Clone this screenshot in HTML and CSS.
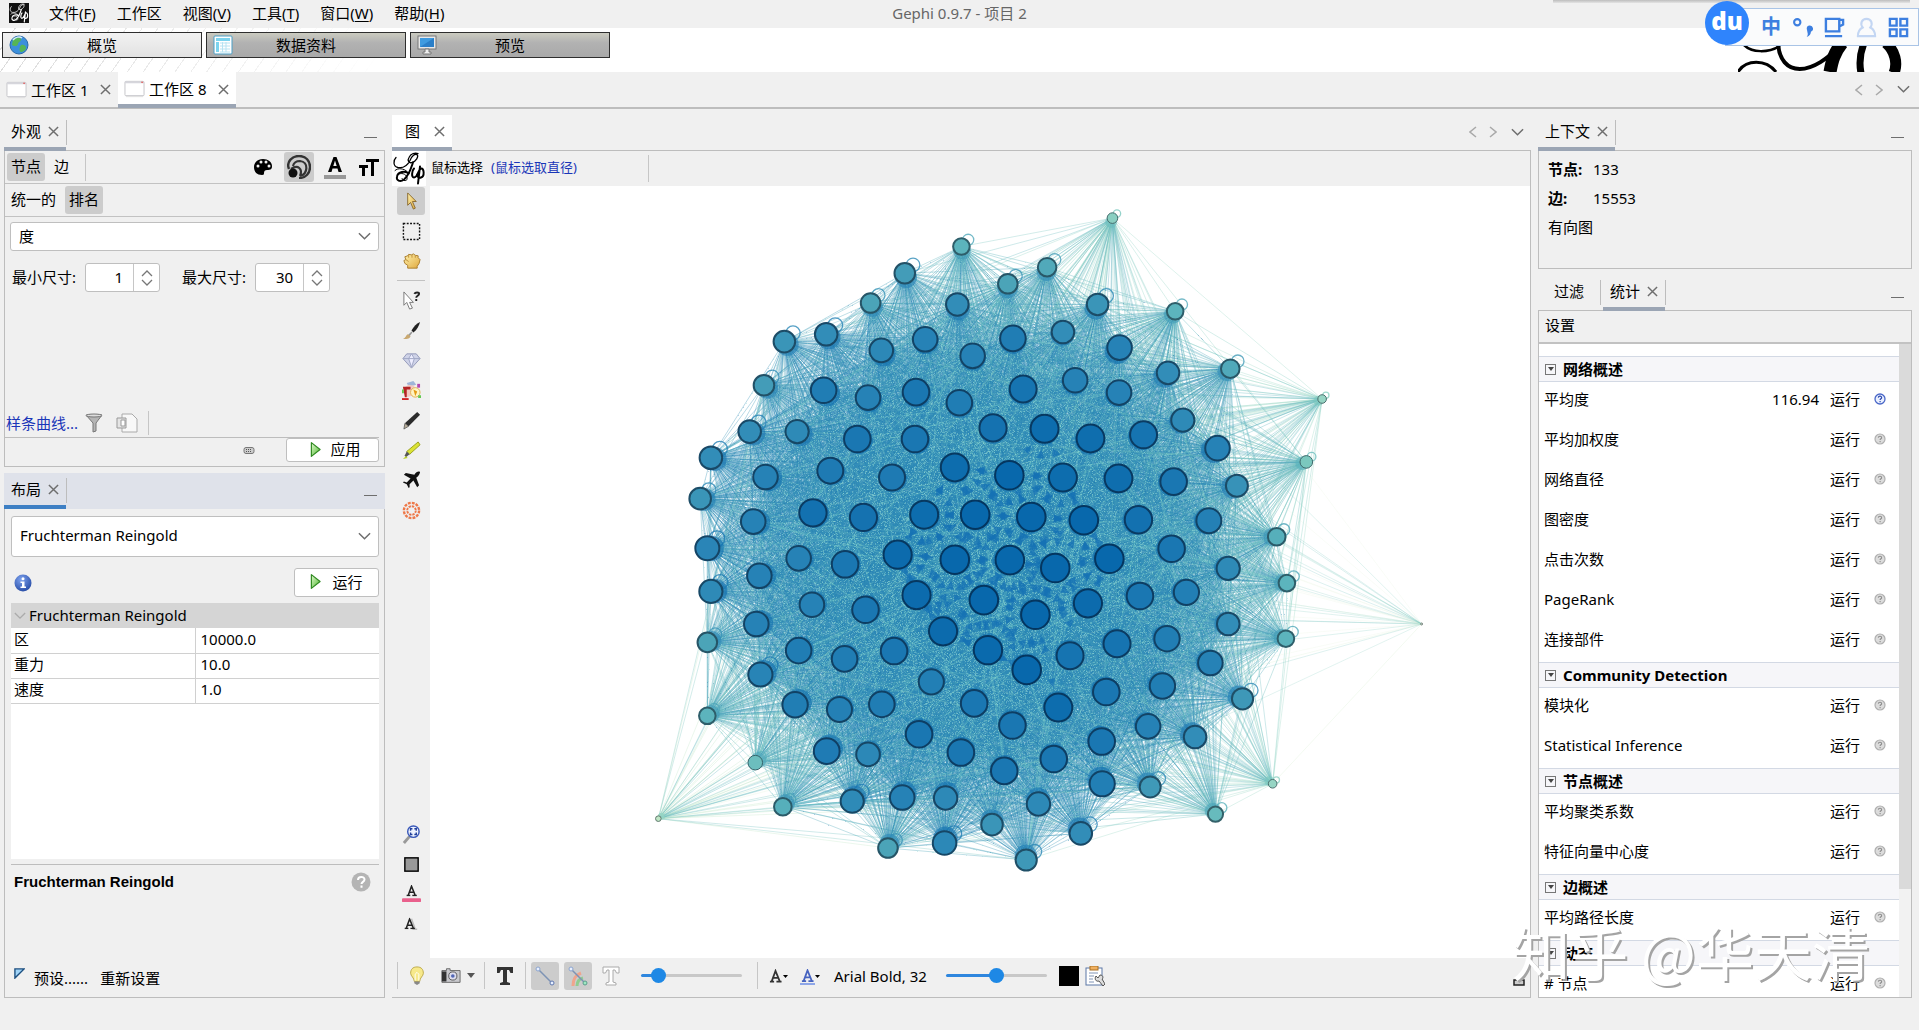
FILE: index.html
```html
<!DOCTYPE html>
<html lang="zh-CN">
<head>
<meta charset="utf-8">
<title>Gephi 0.9.7 - 项目 2</title>
<link rel="stylesheet" href="styles.css">
</head>
<body>
<svg class="defs" aria-hidden="true">
  <defs>
    <linearGradient id="gPlay" x1="0" y1="0" x2="1" y2="1"><stop offset="0" stop-color="#e2f8cf"/><stop offset="1" stop-color="#4cb82e"/></linearGradient>
    <radialGradient id="gBall" cx=".4" cy=".3" r=".8"><stop offset="0" stop-color="#7da2ee"/><stop offset="1" stop-color="#1f449f"/></radialGradient>
    <linearGradient id="gGold" x1="0" y1="0" x2="1" y2="1"><stop offset="0" stop-color="#fff3b0"/><stop offset="1" stop-color="#e0a83c"/></linearGradient>
    <symbol id="x" viewBox="0 0 12 12"><path d="M1 1l10 10M11 1L1 11" stroke="#6e6e6e" stroke-width="1.6" fill="none"/></symbol>
    <symbol id="down" viewBox="0 0 14 9"><path d="M1 1l6 6 6-6" stroke="#6e6e6e" stroke-width="1.6" fill="none"/></symbol>
    <symbol id="left" viewBox="0 0 8 12"><path d="M7 1L1 6l6 5" stroke="#a9a9a9" stroke-width="1.5" fill="none"/></symbol>
    <symbol id="right" viewBox="0 0 8 12"><path d="M1 1l6 5-6 5" stroke="#a9a9a9" stroke-width="1.5" fill="none"/></symbol>
    <symbol id="win" viewBox="0 0 22 18"><rect x="1" y="1" width="20" height="15" rx="1" fill="#fff" stroke="#c4c4c8"/><path d="M1 2h20" stroke="#d6d6dc" stroke-width="2"/><path d="M18 2h2" stroke="#e07070" stroke-width="1.5"/><path d="M2 17h18" stroke="#ddd"/></symbol>
    <symbol id="play" viewBox="0 0 12 18"><path d="M1.500 1.500v15L11 9z" fill="url(#gPlay)" stroke="#2f8a20" stroke-width="1.300" stroke-linejoin="round"/></symbol>
    <symbol id="help" viewBox="0 0 12 12"><circle cx="6" cy="6" r="5" fill="#dcdcdc" stroke="#b0b0b0" stroke-width="1.200"/><path d="M4.300 4.600c.2-2 3.600-1.800 3.300.2-.2 1-1.500 1-1.500 2.200M6.100 8.100v1.100" fill="none" stroke="#8e8e8e" stroke-width="1.100"/></symbol>
    <symbol id="helpOn" viewBox="0 0 12 12"><circle cx="6" cy="6" r="5" fill="#eaf0ff" stroke="#4a68c8" stroke-width="1.300"/><path d="M4.300 4.600c.2-2 3.600-1.800 3.300.2-.2 1-1.500 1-1.500 2.200M6.100 8.100v1.100" fill="none" stroke="#2d49ad" stroke-width="1.200"/></symbol>
    <symbol id="gephi" viewBox="0 0 34 34"><g fill="none" stroke="currentColor" stroke-linecap="round"><path d="M4 6c-3 3-3 9 2 10 6 1 10-3 12-7 2-5 5-7 7-6 2 2-1 7-5 8-3 1-5-2-3-5 2-4 6-5 9-4" stroke-width="1.300"/><path d="M21 11c-2 6-4 13-9 17-4 3-8 1-7-3 1-5 8-6 12-3" stroke-width="1.900"/><path d="M3 19c3-3 9-2 12 1M6 23c3-2 8-1 9 3s-4 4-5 1" stroke-width="1"/><path d="M22 17c-2 2-3 9 0 9 4 0 4-8 7-9 3-1 4 8 0 9-2 1-4-1-4-3M28 15l-2 17" stroke-width="2"/></g></symbol>
    <symbol id="serifA" viewBox="0 0 14 14"><path d="M1 13h4.500M8 13h5.500M3 12.500L7 1.500l4.500 11M4.500 9h5" stroke="currentColor" stroke-width="1.900" fill="none"/></symbol>
    <symbol id="serifT" viewBox="0 0 18 20"><path d="M1 1h16v6h-2.500L13 4h-2v12l3 1v2H4v-2l3-1V4H5L3.500 7H1z"/></symbol>
  </defs>
</svg>

<header class="titlebar">
  <svg class="app-icon" viewBox="0 0 34 34"><rect width="34" height="34" fill="#111"/><use href="#gephi"/></svg>
  <nav class="menu">
    <button>文件(<u>F</u>)</button><button>工作区</button><button>视图(<u>V</u>)</button><button>工具(<u>T</u>)</button><button>窗口(<u>W</u>)</button><button>帮助(<u>H</u>)</button>
  </nav>
  <h1 class="title">Gephi 0.9.7 - 项目 2</h1>
</header>

<div class="banner">
  <div class="modes">
    <button class="mode mode-on"><svg viewBox="0 0 20 20"><circle cx="10" cy="10" r="9" fill="#3c8fdc" stroke="#2a69a8"/><path d="M4 4c4-3 7-2 8 0s-3 3-3 5-4 3-6 1zM12 10c3-1 5 1 5 3s-3 4-5 4-2-5 0-7z" fill="#56b556"/><path d="M4 5c2-3 7-4 9-2" stroke="#d5ecff" stroke-width="1.500" fill="none"/></svg>概览</button>
    <button class="mode"><svg viewBox="0 0 20 20"><rect x="1" y="1" width="18" height="18" rx="1" fill="#fff" stroke="#4b9fc6"/><path d="M3 3h14v3H3zM3 7h3v10H3z" fill="#7cd3ee"/><path d="M7 8h10M7 11h10M7 14h10M7 17h10M9.500 7v10M13 7v10" stroke="#b7e3f2"/></svg>数据资料</button>
    <button class="mode"><svg viewBox="0 0 20 20"><rect x="1" y="1" width="18" height="13" fill="#e8e8e8" stroke="#777"/><rect x="3" y="3" width="14" height="9" fill="#3f9be0"/><path d="M3 12L17 3v9z" fill="#2b7fc8"/><path d="M8 14h4v3h2v2H6v-2h2z" fill="#eee" stroke="#777"/></svg>预览</button>
  </div>
  <svg class="banner-logo" viewBox="0 0 165 27"><g fill="none" stroke="#000"><path d="M6 0c8 8 24 8 36 1" stroke-width="2.500"/><path d="M0 27c8-13 28-13 38 0" stroke-width="3"/><path d="M40-2c2 34 34 36 66-2" stroke-width="4"/><path d="M104-2C96 8 94 16 92 27" stroke-width="13"/><path d="M126-2c-4 10-5 20-3 30" stroke-width="7"/><path d="M148-2c9 8 12 20 8 30" stroke-width="11"/></g></svg>
</div>

<div class="docbar">
  <div class="doc"><svg class="i-win"><use href="#win"/></svg>工作区 1<button class="close" aria-label="关闭"><svg><use href="#x"/></svg></button></div>
  <div class="doc doc-on"><svg class="i-win"><use href="#win"/></svg>工作区 8<button class="close" aria-label="关闭"><svg><use href="#x"/></svg></button></div>
  <div class="pager"><svg class="arr"><use href="#left"/></svg><svg class="arr"><use href="#right"/></svg><svg class="chev"><use href="#down"/></svg></div>
</div>

<main class="desk">
  <div class="side">
    <section class="dock">
      <div class="tabs"><div class="tab tab-on">外观<button class="close" aria-label="关闭"><svg><use href="#x"/></svg></button></div><button class="min" aria-label="最小化"></button></div>
      <div class="pane">
        <div class="strip">
          <button class="tog tog-on">节点</button><button class="tog">边</button><i class="vr"></i>
          <div class="kinds">
            <button class="kind" aria-label="颜色"><svg viewBox="0 0 20 20"><path d="M10 2C4 2 1 6 1 10c0 5 3 8 8 8 2 0 2-1 2-2 0-2 1-3 3-3 4 0 5-1 5-4 0-4-4-7-9-7z" fill="#000"/><g fill="#f0f0f0"><circle cx="5" cy="9" r="1.500"/><circle cx="8" cy="5" r="1.500"/><circle cx="13" cy="5" r="1.500"/><circle cx="16" cy="9" r="1.500"/></g></svg></button>
            <button class="kind tog-on" aria-label="大小"><svg viewBox="0 0 24 24"><path d="M2 14C-1 7 5 1 12 1s11 5 11 11-4 11-11 11" fill="none" stroke="#333" stroke-width="2.400"/><path d="M6 11c1-4 4-5 7-5 9 1 8 13 0 15M4 14c7-5 12 0 9 7" fill="none" stroke="#333" stroke-width="2.200"/><circle cx="6" cy="18" r="4.500" fill="#111"/></svg></button>
            <button class="kind" aria-label="标签颜色"><svg viewBox="0 0 24 24"><path d="M5 17L10.500 2h3L19 17h-3.500l-1-3.500h-5l-1 3.500zM10.300 11h3.400L12 5.500z"/><path d="M1 20h22v4H1z" fill="#999"/></svg></button>
            <button class="kind" aria-label="标签大小"><svg viewBox="0 0 20 20"><path d="M7 2h13v3h-5v14h-3V5H7zM0 8h9v3H6v8H3v-8H0z"/></svg></button>
          </div>
        </div>
        <div class="strip"><button class="tog">统一的</button><button class="tog tog-on">排名</button></div>
        <div class="appearance-body">
          <div class="combo"><select aria-label="排名属性"><option>度</option></select><svg class="chev"><use href="#down"/></svg></div>
          <div class="sizes">
            <label for="mn">最小尺寸:</label>
            <div class="spin"><input id="mn" type="text" inputmode="numeric" value="1"><svg viewBox="0 0 12 18"><path d="M1 7l5-5 5 5M1 11l5 5 5-5" fill="none" stroke="#777" stroke-width="1.300"/></svg></div>
            <label for="mx" class="second">最大尺寸:</label>
            <div class="spin"><input id="mx" type="text" inputmode="numeric" value="30"><svg viewBox="0 0 12 18"><path d="M1 7l5-5 5 5M1 11l5 5 5-5" fill="none" stroke="#777" stroke-width="1.300"/></svg></div>
          </div>
        </div>
        <div class="spline"><a href="#spline">样条曲线...</a>
          <svg viewBox="0 0 18 20"><path d="M1 2h16l-6 8v8l-3 1v-9z" fill="#b5b5b5" stroke="#777"/><ellipse cx="9" cy="2.500" rx="8" ry="1.500" fill="#ddd" stroke="#777"/></svg>
          <svg class="wide" viewBox="0 0 22 20"><path d="M6 1h10l5 5v13H6z" fill="#f8f8f8" stroke="#aaa"/><path d="M1 5h9v10H1z" fill="#e5e5e5" stroke="#999"/><path d="M5 7h4v6H5z" fill="#fff" stroke="#999"/></svg>
          <i class="vr"></i></div>
        <div class="apply"><svg class="tiny" viewBox="0 0 12 8"><rect x="1" y="1" width="10" height="6" rx="2" fill="#ccc" stroke="#777"/><path d="M3 3h6M3 5h6" stroke="#555" stroke-dasharray="1 1"/></svg><button class="push"><svg><use href="#play"/></svg>应用</button></div>
      </div>
    </section>

    <section class="dock grow">
      <div class="tabs tabs-focus"><div class="tab tab-on">布局<button class="close" aria-label="关闭"><svg><use href="#x"/></svg></button></div><button class="min" aria-label="最小化"></button></div>
      <div class="pane layout-pane">
        <div class="combo tall"><select aria-label="布局算法"><option>Fruchterman Reingold</option></select><svg class="chev"><use href="#down"/></svg></div>
        <div class="runrow"><svg class="info" viewBox="0 0 18 18"><circle cx="9" cy="9" r="8.500" fill="url(#gBall)"/><circle cx="9" cy="4.700" r="1.500" fill="#fff"/><path d="M6.500 7.500h4v5h1.500v1.500H6.500v-1.500H8V9H6.500z" fill="#fff"/></svg><button class="push"><svg><use href="#play"/></svg>运行</button></div>
        <div class="sheet">
          <table>
            <thead><tr><th colspan="2"><svg class="fold"><use href="#down"/></svg>Fruchterman Reingold</th></tr></thead>
            <tbody><tr><td>区</td><td>10000.0</td></tr><tr><td>重力</td><td>10.0</td></tr><tr><td>速度</td><td>1.0</td></tr></tbody>
          </table>
        </div>
        <div class="about"><strong>Fruchterman Reingold</strong><svg viewBox="0 0 20 20"><circle cx="10" cy="10" r="9.500" fill="#b4b4b4"/><path d="M7 8c0-4 6.500-4 6.500-.5 0 2.500-3 2.300-3 4.500M10.500 13.500v2.200" fill="none" stroke="#fff" stroke-width="2"/></svg></div>
        <div class="presets"><svg viewBox="0 0 12 12"><path d="M1 1h10L1 11z" fill="#9fd3f7" stroke="#1c4f80" stroke-width="1.500"/></svg><button>预设......</button><button>重新设置</button></div>
      </div>
    </section>
  </div>

  <section class="graph">
    <div class="tabs"><div class="tab tab-on tab-white">图<button class="close" aria-label="关闭"><svg><use href="#x"/></svg></button></div>
      <div class="pager"><svg class="arr"><use href="#left"/></svg><svg class="arr"><use href="#right"/></svg><svg class="chev"><use href="#down"/></svg></div></div>
    <div class="graph-pane">
      <div class="hintbar"><svg class="mark" viewBox="0 0 34 34"><use href="#gephi"/></svg><span>鼠标选择</span><a href="#diameter">(鼠标选取直径)</a><i class="vr"></i></div>
      <div class="stage">
        <div class="tools">
          <button class="tog-on" aria-label="选择"><svg viewBox="0 0 20 20"><path d="M6 1v13l3-3 3 7 2-1-3-7h4z" fill="url(#gGold)" stroke="#8a6a30"/></svg></button>
          <button aria-label="矩形选择"><svg viewBox="0 0 20 20"><rect x="1.500" y="1.500" width="17" height="17" fill="none" stroke="#111" stroke-width="1.500" stroke-dasharray="2 1.500"/></svg></button>
          <button aria-label="拖动"><svg viewBox="0 0 20 20"><path d="M6 17v-3l-3-2-1-3 2-1-1-3 3-1 1-1.500 3 .5 2-1 2 1.500 3 .5v2l2 2-1 4-2 3v2z" fill="url(#gGold)" stroke="#a97c2c"/><path d="M7 3v3M10.500 3v3M14 4v2M4 8l3 2" fill="none" stroke="#c08f38"/></svg></button>
          <hr>
          <button aria-label="查询"><svg viewBox="0 0 20 20"><path d="M2 1v14l3-3 3 7 3-1-3-6h4z" fill="#fff" stroke="#777"/><path d="M13 3c1-2 5-2 5 0s-3 2-3 4M15 8.500v2" fill="none" stroke="#222" stroke-width="2"/></svg></button>
          <button aria-label="画刷"><svg viewBox="0 0 20 20"><path d="M19 1c-4 2-7 5-9 9l2 2c4-3 6-7 7-11z" fill="#222"/><path d="M10 11l1 1-3 4-2-1z" fill="#999"/><path d="M6 14l3 2c-1 3-5 3-8 3 3-1 3-4 5-5z" fill="#c9a870"/></svg></button>
          <button aria-label="大小"><svg viewBox="0 0 20 20"><path d="M5 3h10l4 5-9 10L1 8z" fill="#cfd3e8" stroke="#9298b8"/><path d="M1 8h18M7 8l3 9 3-9-3-5z" fill="#eef" stroke="#9fa5c4"/></svg></button>
          <button aria-label="填色"><svg viewBox="0 0 20 20"><path d="M5 2l7-2 3 4-8 2z" fill="#9fb5d8"/><path d="M1 8l6-4 6 1-1 10-7 2z" fill="#f3c9c0"/><path d="M1 6h8v3H5v8H3z" fill="#b42525"/><circle cx="14" cy="12" r="5" fill="#fff4c4" stroke="#e0b050"/><path d="M12 9l4 2-2 5z" fill="#e59b13"/><path d="M0 19h7" stroke="#d02525" stroke-width="2"/><path d="M16 3h3v4h-3z" fill="#b348b0"/><path d="M0 9h2v4H0zM17 15h3v3h-3z" fill="#64c850"/></svg></button>
          <button aria-label="铅笔"><svg viewBox="0 0 20 20"><path d="M16 1l3 3L7 16l-4-3z" fill="#2b2b2b"/><path d="M3 13l4 3-5 3z" fill="#b8ad9a" stroke="#444" stroke-width=".7"/></svg></button>
          <button aria-label="荧光笔"><svg viewBox="0 0 20 20"><path d="M17 1l2 3L8 14l-3-3z" fill="#dbe234" stroke="#98a01c"/><path d="M5 11l3 3-4 3-1-2z" fill="#555"/><path d="M1 19l3-3 2 2z" fill="#b8cf20"/></svg></button>
          <button aria-label="最短路径"><svg viewBox="0 0 20 20"><path d="M19 1c-2-1-4 0-6 3L4 2 2 4l7 4-4 4-3-1-1 1 4 2 2 4 1-1v-3l4-4 4 7 2-2-3-8c3-2 4-5 4-6z" fill="#111"/></svg></button>
          <button aria-label="热图"><svg viewBox="0 0 20 20"><circle cx="10" cy="10" r="8" fill="none" stroke="#ee7848" stroke-width="2.500" stroke-dasharray="3 1.200"/><circle cx="10" cy="10" r="4.500" fill="none" stroke="#ee7848" stroke-width="2" stroke-dasharray="2.500 1"/></svg></button>
          <div class="tools-end">
            <button aria-label="居中"><svg viewBox="0 0 20 20"><path d="M8 12l-6 7" stroke="#999" stroke-width="3"/><circle cx="12" cy="7" r="6" fill="#eef3ff" stroke="#3857b8" stroke-width="1.500"/><path d="M9 6V4h2M13 4h2v2M15 8v2h-2M11 10H9V8" fill="none" stroke="#223f9a" stroke-width="1.500"/></svg></button>
            <button aria-label="重置颜色"><svg viewBox="0 0 20 20"><rect x="3" y="3" width="14" height="14" fill="#999" stroke="#000" stroke-width="1.500"/></svg></button>
            <button aria-label="标签颜色"><svg viewBox="0 0 20 20"><use href="#serifA" x="4" y="0" width="12" height="12" color="#222"/><rect y="14" width="20" height="4" rx="1" fill="#e9608c"/></svg></button>
            <button aria-label="标签大小"><svg viewBox="0 0 20 20"><path d="M11 15h5M10 4l4 11" stroke="#bbb" stroke-width="1.500" fill="none"/><use href="#serifA" x="2" y="3" width="12" height="12" color="#222"/></svg></button>
          </div>
        </div>
        <div class="view"><canvas id="graph" role="img" aria-label="网络图"></canvas></div>
      </div>
      <div class="bottombar">
        <i class="vr"></i>
        <button aria-label="背景"><svg viewBox="0 0 20 22"><path d="M10 1C5 1 3 4 3 8c0 3 4 5 4 9h6c0-4 4-6 4-9 0-4-2-7-7-7z" fill="#f7e98b" stroke="#b9a646"/><path d="M8 16V9l2-2 2 2v7" fill="none" stroke="#fff"/><path d="M7 17h6v2l-3 2-3-2z" fill="#888"/></svg></button>
        <button class="camera" aria-label="截图"><svg viewBox="0 0 22 20"><path d="M1 4h5V2h4v2h11v13H1z" fill="#c9c9cd" stroke="#666"/><path d="M1 5h5v11H1z" fill="#333"/><circle cx="13" cy="10" r="4.500" fill="#dde" stroke="#555"/><circle cx="13" cy="10" r="2" fill="#5267b5"/></svg><i class="caret"></i></button>
        <i class="vr"></i>
        <button class="t-dark" aria-label="节点标签"><svg><use href="#serifT"/></svg></button>
        <i class="vr"></i>
        <button class="tog-on" aria-label="显示边"><svg viewBox="0 0 20 20"><path d="M3 3l14 14" stroke="#7d93b4" stroke-width="1.500"/><circle cx="3" cy="3" r="2" fill="#e8f0ff" stroke="#8ba4cf"/><circle cx="17" cy="17" r="2" fill="#e8f0ff" stroke="#5d76ae"/></svg></button>
        <button class="tog-on" aria-label="边使用节点颜色"><svg viewBox="0 0 20 20"><path d="M5 20c0-8 3-11 8-13" stroke="#f0a48c" stroke-width="3" fill="none"/><path d="M9 20c0-4 2-7 6-8" stroke="#90cc90" stroke-width="3" fill="none"/><path d="M3 3l14 14" stroke="#7d93b4" stroke-width="1.500"/><circle cx="3" cy="3" r="2" fill="#e8f0ff" stroke="#8ba4cf"/><circle cx="17" cy="17" r="2" fill="#9ee8c0" stroke="#5d9e8e"/></svg></button>
        <button class="t-light" aria-label="边标签"><svg><use href="#serifT"/></svg></button>
        <input class="slider s1" type="range" min="0" max="100" value="12" aria-label="边粗细">
        <i class="vr"></i>
        <button class="small" aria-label="标签大小模式"><svg viewBox="0 0 20 20"><use href="#serifA" x="1" y="3" width="13" height="14" color="#333"/><path d="M15 9h5l-2.500 3z"/></svg></button>
        <button class="small" aria-label="标签颜色模式"><svg viewBox="0 0 20 20"><use href="#serifA" x="1" y="3" width="13" height="13" color="#4663c0"/><path d="M0 18h15" stroke="#8ea6e8" stroke-width="2"/><path d="M15 9h5l-2.500 3z"/></svg></button>
        <button class="fontname">Arial Bold, 32</button>
        <input class="slider s2" type="range" min="0" max="100" value="50" aria-label="标签大小">
        <button class="swatch" aria-label="标签默认颜色"></button>
        <button aria-label="标签设置" class="clip"><svg viewBox="0 0 20 20"><rect x="1" y="2" width="16" height="17" fill="#fff" stroke="#5b76a5"/><rect x="5" y="0" width="8" height="4" fill="#f0b060" stroke="#a87025"/><path d="M4 7h9M4 10h5M4 13h4M4 16h5" stroke="#8094b5"/><path d="M11 10l2 2 2-3c4 0 3 4 2 4l3 5-2 2-4-5c-3 1-5-2-3-5z" fill="#ddd" stroke="#555"/></svg></button>
        <svg class="tiny end" viewBox="0 0 12 10"><rect x="1" y="4" width="10" height="5" fill="#ccc" stroke="#222" stroke-width="1.500"/><path d="M6 3l4-2v2" fill="none" stroke="#222"/></svg>
      </div>
    </div>
  </section>

  <div class="side">
    <section class="dock">
      <div class="tabs"><div class="tab tab-on">上下文<button class="close" aria-label="关闭"><svg><use href="#x"/></svg></button></div><button class="min" aria-label="最小化"></button></div>
      <dl class="pane context"><dt>节点:</dt><dd>133</dd><dt>边:</dt><dd>15553</dd><dt class="plain">有向图</dt></dl>
    </section>
    <section class="dock grow">
      <div class="tabs"><div class="tab tab-off">过滤</div><div class="tab tab-on">统计<button class="close" aria-label="关闭"><svg><use href="#x"/></svg></button></div><button class="min" aria-label="最小化"></button></div>
      <div class="pane stats">
        <button class="settings">设置</button>
        <div class="scroll">
          <div class="list">
            <h2><i class="box"></i>网络概述</h2>
            <p><span>平均度</span><b>116.94</b><button>运行</button><svg><use href="#helpOn"/></svg></p>
            <p><span>平均加权度</span><button>运行</button><svg><use href="#help"/></svg></p>
            <p><span>网络直径</span><button>运行</button><svg><use href="#help"/></svg></p>
            <p><span>图密度</span><button>运行</button><svg><use href="#help"/></svg></p>
            <p><span>点击次数</span><button>运行</button><svg><use href="#help"/></svg></p>
            <p><span>PageRank</span><button>运行</button><svg><use href="#help"/></svg></p>
            <p><span>连接部件</span><button>运行</button><svg><use href="#help"/></svg></p>
            <h2><i class="box"></i>Community Detection</h2>
            <p><span>模块化</span><button>运行</button><svg><use href="#help"/></svg></p>
            <p><span>Statistical Inference</span><button>运行</button><svg><use href="#help"/></svg></p>
            <h2><i class="box"></i>节点概述</h2>
            <p><span>平均聚类系数</span><button>运行</button><svg><use href="#help"/></svg></p>
            <p><span>特征向量中心度</span><button>运行</button><svg><use href="#help"/></svg></p>
            <h2><i class="box"></i>边概述</h2>
            <p><span>平均路径长度</span><button>运行</button><svg><use href="#help"/></svg></p>
            <h2><i class="box"></i>动态</h2>
            <p><span># 节点</span><button>运行</button><svg><use href="#help"/></svg></p>
          </div>
          <div class="track"><div class="thumb"></div></div>
        </div>
      </div>
    </section>
  </div>
</main>

<div class="topshade"></div>
<div class="ime">
  <div class="ime-ball">du</div>
  <span>中</span>
  <svg viewBox="0 0 20 20"><circle cx="5" cy="5" r="3" fill="none" stroke="#3d7fe0" stroke-width="2"/><path d="M14 11a3 3 0 1 1 4 3c0 2-1 4-4 5 1-1 1-2 1-3z" fill="#3d7fe0"/></svg>
  <svg viewBox="0 0 22 22"><path d="M2 2h14v13H2zM16 3h4v5l-4 2M1 20h18" fill="none" stroke="#3d7fe0" stroke-width="2.500"/></svg>
  <svg viewBox="0 0 22 22"><path d="M7 11c-3-4-1-9 4-9s7 5 4 9c4 2 5 5 5 9H2c0-4 1-7 5-9z" fill="none" stroke="#c3d6f3" stroke-width="2.200"/></svg>
  <svg viewBox="0 0 22 22"><path d="M2 2h7v7H2zM13 2h7v7h-7zM2 13h7v7H2zM13 13h7v7h-7z" fill="none" stroke="#3d7fe0" stroke-width="2.500"/></svg>
</div>
<div class="watermark">知乎 @华天清</div>
<script src="graph.js"></script>
</body>
</html>
```
FILE: styles.css
```css
* { box-sizing: border-box; }
body {
  margin: 0;
  min-height: 100vh;
  height: 100vh;
  display: flex;
  flex-direction: column;
  overflow: hidden;
  background: #f0f0f0;
  color: #000;
  font: 15px/20px "Noto Sans", "Noto Sans CJK SC", sans-serif;
}
button, input, select { font: inherit; color: inherit; margin: 0; }
button { border: 0; padding: 0; background: none; white-space: nowrap; }
a { text-decoration: none; color: #1a36b8; }
svg { display: block; flex: none; }
.defs { position: absolute; width: 0; height: 0; }
.vr { flex: none; width: 1px; height: 27px; background: #c6c6c6; }
.chev { width: 13px; height: 9px; }
.arr { width: 8px; height: 12px; }
.close { margin-left: 7px; display: flex; }
.close svg { width: 11px; height: 11px; }
.tog-on { background: #cccccc; border-radius: 3px; }
.tiny { width: 12px; height: 9px; }
.grow { flex: 1; min-height: 0; }

/* title and banner */
.titlebar { position: relative; height: 28px; display: flex; align-items: center; padding: 0 9px 2px; flex: none; }
.app-icon { width: 20px; height: 20px; color: #fff; }
.menu { display: flex; gap: 21px; margin-left: 20px; }
.menu u { text-underline-offset: 2px; }
.title { position: absolute; left: 0; right: 0; margin: 0; text-align: center; font: inherit; color: #666; pointer-events: none; }
.banner { position: relative; flex: none; height: 44px; background: #fff; padding: 4px 2px; display: flex; justify-content: space-between; }
.banner::before {
  content: ""; position: absolute; inset: 0 auto 0 0; width: 20%;
  background: repeating-linear-gradient(125deg, #fff 0 12px, #dcdcdc 12px 13px);
  -webkit-mask: linear-gradient(90deg, #000, transparent);
  mask: linear-gradient(90deg, #000, transparent);
}
.modes { position: relative; display: flex; gap: 4px; }
.mode { width: 200px; height: 26px; border: 1px solid #2e2e2e; background: linear-gradient(#cbcbc0, #b2b2b2 40%, #a9a9a9); position: relative; line-height: 22px; }
.mode-on { background: linear-gradient(#f2f2f2, #e2e2e2); }
.mode svg { position: absolute; left: 6px; top: 2px; width: 20px; height: 20px; }
.banner-logo { width: 165px; height: 27px; margin: 13px 14px 0 0; align-self: flex-start; }

/* workspace tabs */
.docbar { flex: none; display: flex; height: 37px; border-bottom: 2px solid #bdbdbd; }
.doc { display: flex; align-items: center; padding: 0 7px 1px 6px; height: 36px; width: 118px; }
.doc .close { margin-left: auto; }
.doc-on { background: #fff; border-bottom: 4px solid #9ba5b4; padding-top: 3px; }
.i-win { width: 21px; height: 18px; margin-right: 4px; }
.pager { margin-left: auto; display: flex; align-items: center; gap: 12px; padding-right: 7px; }
.docbar .pager { padding-right: 9px; }
.pager .chev { margin-left: 2px; }

/* docked windows */
.desk { flex: 1; min-height: 0; display: grid; grid-template-columns: 381fr 1139fr 374fr; gap: 7px; padding: 6px 7px 32px 4px; }
.side { display: flex; flex-direction: column; gap: 6px; min-width: 0; min-height: 0; }
.dock, .graph { display: flex; flex-direction: column; min-width: 0; min-height: 0; }
.tabs { flex: none; display: flex; height: 36px; position: relative; z-index: 1; }
.tabs-focus { background: #dfe2ea; }
.tab { display: flex; align-items: center; padding: 0 7px; position: relative; height: 36px; }
.tab-on { border-bottom: 4px solid #9ba5b4; }
.tabs-focus .tab-on { border-color: #3d7fc4; }
.tab:not(.tab-white)::after { content: ""; position: absolute; right: -1px; top: 5px; height: 25px; width: 1px; background: #bdbdbd; }
.tab-off { padding: 0 16px 4px; margin-right: 3px; }
.tab-white { background: #fff; width: 60px; padding-left: 13px; }
.tab-white .close { margin-left: auto; }
.min { margin: 22px 8px 0 auto; width: 13px; height: 1px; background: #6e6e6e; }
.pane { margin: -1px 0 0; border: 1px solid #bdbdbd; }
.strip { display: flex; align-items: center; height: 33px; border-bottom: 1px solid #c2c2c2; padding: 0 2px; }
.tog { height: 28px; padding: 0 4px 2px; margin-right: 5px; }
.strip .vr { margin-left: 7px; }
.kinds { margin-left: auto; display: flex; gap: 6px; }
.kind { width: 30px; height: 30px; display: grid; place-items: center; }
.kind:last-child { width: 26px; }
.kind svg { width: 20px; height: 20px; }
.kind:nth-child(n+2):nth-child(-n+3) svg { width: 24px; height: 24px; }
.appearance-body { padding: 5px 5px 116px; }
.combo { display: grid; align-items: center; }
.combo > * { grid-area: 1 / 1; }
.combo select { appearance: none; width: 100%; height: 29px; border: 1px solid #bfbfbf; border-radius: 3px; background: #fff; padding: 0 8px 2px; }
.combo .chev { justify-self: end; margin-right: 8px; pointer-events: none; }
.combo.tall select { height: 41px; padding-bottom: 4px; }
.sizes { display: flex; align-items: center; margin: 12px 0 0 2px; }
.sizes label { padding-bottom: 2px; }
.spin { width: 75px; height: 29px; margin-left: 9px; display: flex; align-items: center; border: 1px solid #bfbfbf; border-radius: 3px; background: #fff; }
.spin input { width: 48px; height: 27px; border: 0; border-right: 1px solid #c6c6c6; text-align: right; padding: 0 10px 2px 0; background: none; }
.spin svg { width: 12px; height: 18px; margin: auto; }
.second { margin-left: 22px; }
.spline { display: flex; align-items: center; gap: 15px; height: 30px; padding: 0 1px; margin-right: 5px; border-bottom: 1px solid #bdbdbd; }
.spline svg { width: 18px; height: 20px; margin-left: -8px; }
.spline .wide { width: 22px; margin-left: -2px; }
.spline .vr { margin-left: -5px; height: 24px; }
.apply { display: flex; align-items: center; justify-content: flex-end; gap: 31px; padding: 0 5px 4px 0; }
.push { display: flex; align-items: center; justify-content: center; height: 24px; width: 93px; border: 1px solid #bfbfbf; border-radius: 3px; background: #fff; gap: 9px; padding: 0 0 2px 6px; }
.push svg { width: 11px; height: 17px; }
.layout-pane { flex: 1; display: flex; flex-direction: column; padding: 7px 5px 0 6px; min-height: 0; }
.runrow { display: flex; align-items: center; justify-content: space-between; padding: 11px 0 6px 3px; }
.runrow .push { height: 29px; width: 85px; gap: 11px; padding-left: 0; }
.info { width: 18px; height: 18px; }
.sheet { flex: 1; background: #fff; }
.sheet table { width: 100%; border-collapse: collapse; table-layout: fixed; }
.sheet th { background: #d5d5d5; text-align: left; font-weight: 400; height: 25px; padding: 0 3px 2px; line-height: 18px; }
.fold { display: inline-block; width: 12px; height: 8px; margin: 0 3px 1px 0; opacity: .4; }
.sheet td { height: 25px; padding: 0 3px 3px; line-height: 18px; border-bottom: 1px solid #d0d0d0; width: 50%; }
.sheet td + td { border-left: 1px solid #d0d0d0; padding-left: 5px; }
.about { margin-top: 5px; border-top: 1px solid #bdbdbd; height: 96px; padding: 7px 8px 0 3px; display: flex; justify-content: space-between; font-family: "Liberation Sans", "Noto Sans CJK SC", sans-serif; }
.about svg { width: 20px; height: 20px; }
.presets { display: flex; align-items: center; height: 37px; padding: 0 3px 2px; }
.presets svg { width: 11px; height: 11px; margin: -8px 9px 0 0; }
.presets button + button { margin-left: 12px; }

/* graph window */
.graph .pager { padding: 0 7px 2px 0; }
.graph-pane { margin-top: -1px; flex: 1; min-height: 0; display: flex; flex-direction: column; border: solid #bdbdbd; border-width: 1px 1px 1px 0; }
.hintbar { flex: none; height: 35px; display: flex; align-items: center; font-size: 13px; }
.hintbar span, .hintbar a { padding-bottom: 3px; }
.hintbar a { margin-left: 8px; }
.mark { width: 34px; height: 35px; background: #fff; margin-right: 5px; }
.hintbar .vr { margin-left: 71px; }
.stage { flex: 1; min-height: 0; display: flex; }
.tools { width: 38px; flex: none; display: flex; flex-direction: column; align-items: center; padding: 1px 5px 18px; }
.tools button { width: 28px; height: 28px; margin-bottom: 2px; display: grid; place-items: center; flex: none; }
.tools svg { width: 19px; height: 19px; }
.tools hr { width: 28px; height: 1px; border: 0; background: #c2c2c2; margin: 3px 0 5px; flex: none; }
.tools-end { margin-top: auto; }
.view { flex: 1; min-width: 0; background: #fff; position: relative; }
.view canvas { position: absolute; inset: 0; width: 100%; height: 100%; }
.bottombar { flex: none; height: 39px; display: flex; align-items: center; padding: 0 5px 4px; }
.bottombar button { flex: none; display: flex; align-items: center; justify-content: center; width: 28px; height: 28px; }
.bottombar svg { width: 20px; height: 20px; }
.bottombar > button:nth-child(2) { margin: 0 8px 0 5px; }
.bottombar .camera { width: 38px; margin-right: 7px; gap: 6px; }
.caret { border: 4px solid transparent; border-top: 5px solid #555; border-bottom: 0; }
.bottombar .t-dark { margin: 0 6px; fill: #333; }
.bottombar .t-light { fill: #fff; stroke: #aaa; margin: 0 16px 0 5px; }
.bottombar .tog-on { margin-left: 5px; }
.bottombar .small { margin-left: 8px; width: 24px; }
.bottombar .fontname { width: auto; margin: 0 19px 0 12px; }
.bottombar .swatch { background: #000; width: 20px; height: 20px; margin: 0 6px 0 12px; }
.bottombar .clip { width: 20px; }
.bottombar .end { width: 12px; height: 10px; margin: 10px 0 0 auto; }
.slider { appearance: none; width: 101px; height: 18px; background: none; }
.slider::-webkit-slider-runnable-track { height: 3px; border-radius: 2px; background: linear-gradient(90deg, #2e86de var(--at), #c8c8c8 var(--at)); }
.slider::-webkit-slider-thumb { appearance: none; width: 15px; height: 15px; margin-top: -6px; border-radius: 50%; background: #1e88e5; }
.s1 { --at: 18%; margin-right: 15px; }
.s2 { --at: 50%; }

/* right side */
.context { display: grid; grid-template-columns: 45px 1fr; align-content: start; gap: 9px 0; padding: 8px 9px; height: 119px; }
.context dt { font-weight: 700; }
.context dd { margin: 0; }
.context .plain { grid-column: 1 / -1; font-weight: 400; }
.stats { flex: 1; display: flex; flex-direction: column; min-height: 0; }
.settings { height: 33px; text-align: left; padding: 0 6px 3px; border-bottom: 2px solid #c2c2c2; flex: none; }
.scroll { flex: 1; display: flex; min-height: 0; }
.list { flex: 1; background: #fff; padding-top: 12px; overflow: hidden; }
.list h2 { margin: 0; height: 26px; display: flex; align-items: center; gap: 7px; padding-left: 6px; font-size: 15px; line-height: 20px; background: #f6f6f9; border: solid #d3d9e4; border-width: 1px 0; }
.box { width: 11px; height: 11px; border: 1px solid #777; display: grid; place-items: center; }
.box::before { content: ""; border: 3px solid transparent; border-top: 4px solid #444; border-bottom: 0; }
.list p { margin: 0; height: 40px; padding: 0 13px 6px 5px; display: flex; align-items: center; }
.list span { margin-right: auto; }
.list b { font-weight: 400; margin-right: 11px; }
.list p svg { width: 12px; height: 12px; margin-left: 14px; }
.track { width: 12px; background: #f2f2f2; flex: none; }
.thumb { height: 83.5%; background: #dadada; }

/* things floating over the window */
.topshade { position: absolute; top: 0; right: 9px; width: 357px; height: 3px; background: linear-gradient(#bdbdbd, #e4e4e4); }
.ime { position: absolute; right: 0; top: 8px; height: 38px; width: 194px; display: flex; align-items: center; gap: 11px; padding: 0 9px 0 35px; background: #fafbfc; border: 1px solid #a9c4e6; }
.ime svg { width: 21px; height: 21px; }
.ime span { color: #3d7fe0; font-size: 20px; font-weight: 700; line-height: 24px; }
.ime-ball { position: absolute; left: -21px; top: -8px; width: 44px; height: 44px; border-radius: 50%; background: #2f84fc; color: #fff; font: 800 24px/40px "Open Sans", sans-serif; text-align: center; }
.watermark { position: absolute; right: 49px; bottom: 45px; font: 58px/68px "Noto Sans CJK SC", sans-serif; color: #fff; text-shadow: 2px 2px 0 #a4a4a4; white-space: nowrap; pointer-events: none; }
```
FILE: graph.js
```js
// Node list: layout x, layout y, radius in pixels.
const nodes = [
  [924,83,6],[628,145,9],[796,190,10],[517,203,11],[719,226,10.5],[450,268,10.5],[620,271,12],[895,271,11.5],[1047,286,9],
  [281,352,11.5],[363,336,12],[471,371,12.5],[557,347,13],[650,383,13],[729,345,13.5],[827,331,12],[938,365,13],[1155,411,10],[1033,420,12],
  [241,447,11],[358,458,13.5],[445,474,13],[539,462,14],[624,485,13.5],[749,455,14.2],[851,436,13],[937,463,13],[1335,477,5],
  [213,548,12],[306,548,12.3],[424,564,14],[537,564,14],[690,540,14.3],[791,542,14.7],[881,563,14.6],[985,555,14.2],[1062,523,12.3],[1130,584,13],[1304,614,7],
  [137,605,12],[244,647,13],[371,633,13.7],[492,648,13.7],[615,626,14.7],[722,643,15],[827,648,14.7],[936,650,14.6],[1044,657,14],[1168,666,11.7],
  [116,694,11.5],[220,744,13],[337,725,14.4],[436,735,14.3],[555,729,14.7],[655,729,15],[765,734,15],[868,741,15],[975,740,14.4],[1113,742,13.2],[1246,777,9.5],
  [130,802,12.7],[309,824,13],[400,837,14],[503,816,14.8],[615,827,15],[723,828,15],[812,845,15],[918,825,15],[1040,803,14],[1151,846,12.3],[1266,878,9],
  [137,896,12.3],[232,862,13],[335,925,13],[440,936,14],[540,904,14.8],[672,915,15],[773,947,15],[876,922,14.8],[978,906,14],[1069,898,13.3],[1151,967,12],[1264,999,9],
  [130,1007,10.5],[226,967,13],[592,983,14.8],[309,1025,13.5],[399,1043,13.5],[496,1026,14],[680,1024,14.9],[756,1067,15],[841,1036,14.2],[933,1010,14.2],[1031,999,13.4],[1116,1052,13],
  [234,1077,12.8],[569,1093,13.3],[912,1115,14],[1022,1102,13.4],[130,1167,9],[302,1143,13.4],[389,1153,13.2],[472,1142,13.5],[653,1140,14],[818,1149,14.7],[1179,1130,11.3],
  [224,1269,8],[545,1207,14],[728,1188,14],[994,1190,13],[1086,1213,12],[903,1223,14],[364,1244,13.6],[445,1251,12.5],[627,1247,14],[712,1287,14],[809,1261,14],[904,1315,13.3],[998,1322,11.2],[1238,1315,5],
  [278,1365,9.5],[414,1353,12.3],[512,1345,13],[597,1346,12.4],[779,1359,12.4],[1126,1381,8.3],[688,1404,11.5],[484,1455,10.5],[595,1444,12.5],[862,1423,12],[755,1481,11.3],[34,1391,3.5],[1530,967,1]
].map(([x, y, r]) => ({ x: 211 + x / 1.96, y: y / 2.178 - 6, r }));

// Colour ramp by radius.
const ramp = [[0,240,249,232],[3,205,235,197],[5,150,213,196],[7,123,200,190],[9,92,180,189],[10.5,75,164,184],[12,50,141,184],[13,38,130,182],[14,26,119,178],[15,8,104,172]];
function colour(r) {
  let i = 1;
  while (i < ramp.length - 1 && r > ramp[i][0]) i++;
  const a = ramp[i - 1], b = ramp[i], t = (r - a[0]) / (b[0] - a[0]);
  return [1, 2, 3].map(k => Math.round(a[k] + (b[k] - a[k]) * t));
}
const css = (c, a = 1) => `rgba(${c[0]},${c[1]},${c[2]},${a})`;
let seed = 7;
const random = () => (seed = (seed * 16807) % 2147483647) / 2147483647;

const edges = [];
nodes.forEach((a, i) => nodes.forEach((b, j) => {
  if (j <= i) return;
  const small = Math.min(a.r, b.r);
  const keep = small < 2 ? 0.25 : small < 4 ? 0.4 : small < 6 ? 0.55 : small < 9 ? 0.75 : 0.95;
  if (random() < keep) edges.push({ a, b, small, order: random() });
}));
edges.sort((p, q) => p.order - q.order);

function draw() {
  seed = 11;
  const canvas = document.getElementById("graph");
  const w = canvas.clientWidth, h = canvas.clientHeight;
  canvas.width = w;
  canvas.height = h;
  const g = canvas.getContext("2d");
  g.translate(Math.round((w - 1101) / 2), Math.round((h - 772) / 2));

  for (const { a, b, small } of edges) {
    const tone = random() < 0.5 ? small : Math.min((a.r + b.r) / 2, 12.6);
    g.strokeStyle = css(colour(Math.min(tone, 12.6)), small < 2 ? 0.3 : small < 7 ? 0.4 : 0.45);
    g.lineWidth = 0.8;
    g.beginPath();
    g.moveTo(a.x, a.y);
    g.lineTo(b.x, b.y);
    g.stroke();
  }

  // Grain along the edges: pale and deep single pixels.
  for (let k = 0; k < 60000; k++) {
    const { a, b, small } = edges[Math.floor(random() * edges.length)];
    const t = random(), deep = random() < 0.25;
    if (small < 9) continue;
    g.fillStyle = deep ? "rgba(28,116,170,.3)" : "rgba(150,220,215,.42)";
    g.fillRect(Math.round(a.x + (b.x - a.x) * t), Math.round(a.y + (b.y - a.y) * t), 1, 1);
  }
  // Bright threads on top.
  for (let k = 0; k < 130; k++) {
    const { a, b, small } = edges[Math.floor(random() * edges.length)];
    if (small < 9) continue;
    g.strokeStyle = "rgba(130,210,205,.4)";
    g.beginPath();
    g.moveTo(a.x, a.y);
    g.lineTo(b.x, b.y);
    g.stroke();
  }

  // Arrowheads on the short central edges.
  for (const { a, b } of edges) {
    const dx = b.x - a.x, dy = b.y - a.y, d = Math.hypot(dx, dy);
    const far = Math.hypot((a.x + b.x) / 2 - 575, (a.y + b.y) / 2 - 375);
    if (a.r < 14.7 || b.r < 14.7 || d > 120 || far > 110) continue;
    const ux = dx / d, uy = dy / d;
    for (const [n, s] of [[b, 1], [a, -1]]) {
      const px = n.x - s * ux * (n.r + 6), py = n.y - s * uy * (n.r + 6);
      g.fillStyle = "rgba(22,114,180,.75)";
      g.beginPath();
      g.moveTo(px, py);
      g.lineTo(px - s * ux * 9 - uy * 4, py - s * uy * 9 + ux * 4);
      g.lineTo(px - s * ux * 9 + uy * 4, py - s * uy * 9 - ux * 4);
      g.fill();
    }
  }

  const cx = 570, cy = 375;
  for (const n of nodes) {
    const dist = Math.hypot(n.x - cx, n.y - cy);
    const c = colour(n.r);
    if (dist > 265 && n.r > 3) {
      g.strokeStyle = css(colour(n.r + 1), 0.8);
      g.lineWidth = 1.3;
      g.beginPath();
      g.arc(n.x + n.r * 0.75, n.y - n.r * 0.75, n.r * 0.62, 0, Math.PI * 2);
      g.stroke();
    }
    if (n.r > 2) {
      const shift = dist > 240 ? 4 : 2;
      g.fillStyle = css(colour(Math.min(14.5, n.r + 2)), 0.6);
      g.beginPath();
      g.arc(n.x + (cx - n.x) / dist * shift, n.y + (cy - n.y) / dist * shift, n.r, 0, Math.PI * 2);
      g.fill();
    }
    g.fillStyle = css(c);
    g.strokeStyle = css([Math.round(c[0] * 0.5), Math.round(c[1] * 0.52), Math.round(c[2] * 0.56)]);
    g.lineWidth = n.r > 8 ? 2 : 1;
    g.beginPath();
    g.arc(n.x, n.y, Math.max(n.r - 0.7, 1), 0, Math.PI * 2);
    g.fill();
    g.stroke();
  }
}
draw();
window.addEventListener("resize", draw);
```
